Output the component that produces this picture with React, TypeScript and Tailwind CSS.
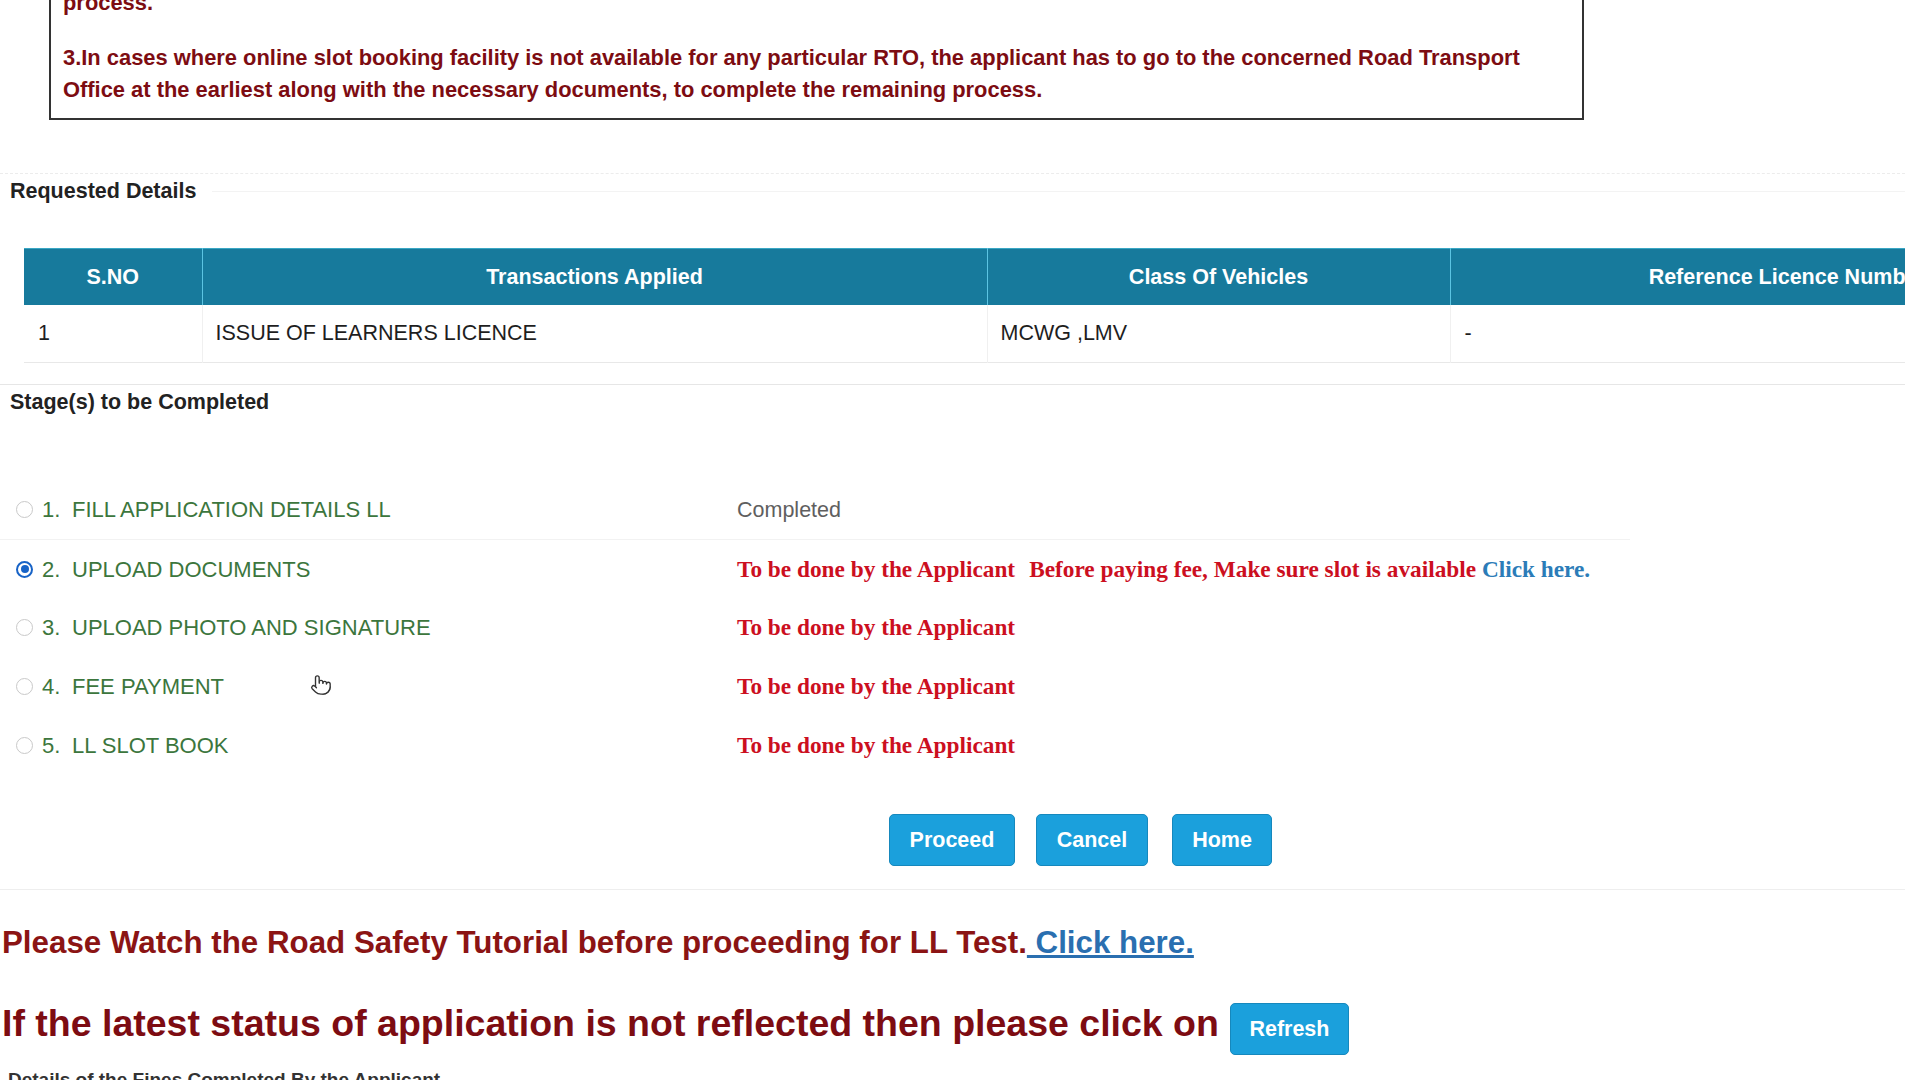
import { Pointer } from "lucide-react";

const STAGES = [
  { no: "1.", label: "FILL APPLICATION DETAILS LL", status: "completed" },
  { no: "2.", label: "UPLOAD DOCUMENTS", status: "pending", checked: true, note: true },
  { no: "3.", label: "UPLOAD PHOTO AND SIGNATURE", status: "pending" },
  { no: "4.", label: "FEE PAYMENT", status: "pending", cursor: true },
  { no: "5.", label: "LL SLOT BOOK", status: "pending" },
];

function Radio({ checked }: { checked?: boolean }) {
  if (checked) {
    return (
      <span className="flex h-[17px] w-[17px] items-center justify-center rounded-full border-2 border-[#1763c7] bg-white">
        <span className="h-[8px] w-[8px] rounded-full bg-[#1763c7]" />
      </span>
    );
  }
  return <span className="h-[17px] w-[17px] rounded-full border border-[#c9c9c9] bg-white" />;
}

function BlueButton({ label, width }: { label: string; width: string }) {
  return (
    <button
      type="button"
      className={`h-[52px] ${width} rounded-[5px] border border-[#1688bd] bg-[#1ba0dc] text-[21.5px] font-bold text-white`}
    >
      {label}
    </button>
  );
}

export default function App() {
  return (
    <div className="h-[1080px] w-[1905px] overflow-hidden bg-white font-['Liberation_Sans',Arial,sans-serif] text-[#222]">
      {/* instructions box, top is scrolled away */}
      <div className="-mt-[15px] ml-[49px] w-[1535px] border-2 border-[#333] px-[12px] pb-[12px] text-[21.9px] font-bold leading-[32px] text-[#7d0c12]">
        <p>process.</p>
        <p className="mt-[23px]">
          3.In cases where online slot booking facility is not available for any particular RTO, the applicant has to go to the concerned Road Transport
          <br />
          Office at the earliest along with the necessary documents, to complete the remaining process.
        </p>
      </div>

      <div className="mt-[53px] border-t border-dashed border-[#ececec]" />

      <div className="mt-[5px] flex items-center gap-4 pl-[10px]">
        <h2 className="text-[21.5px] font-bold leading-[24px] text-[#222]">Requested Details</h2>
        <div className="h-px flex-1 bg-[#f3f3f3]" />
      </div>

      <table className="mt-[45px] ml-[24px] w-[2100px] table-fixed border-collapse text-[21.5px]">
        <colgroup>
          <col className="w-[178px]" />
          <col className="w-[785px]" />
          <col className="w-[463px]" />
          <col />
        </colgroup>
        <thead>
          <tr className="h-[56px] border-t border-[#3aa7c4] bg-[#177a9c] font-bold text-white">
            <th className="text-center">S.NO</th>
            <th className="border-l border-[#5cc4e2] text-center">Transactions Applied</th>
            <th className="border-l border-[#5cc4e2] text-center">Class Of Vehicles</th>
            <th className="border-l border-[#5cc4e2] text-center">Reference Licence Number</th>
          </tr>
        </thead>
        <tbody>
          <tr className="h-[58px] border-b border-[#e8e8e8] font-normal text-[#1e1e1e]">
            <td className="pl-[14px]">1</td>
            <td className="border-l border-[#f0f0f0] pl-[13px]">ISSUE OF LEARNERS LICENCE</td>
            <td className="border-l border-[#f0f0f0] pl-[13px]">MCWG ,LMV</td>
            <td className="border-l border-[#f0f0f0] pl-[14px]">-</td>
          </tr>
        </tbody>
      </table>

      <div className="mt-[21px] border-t border-[#e6e6e6] pt-[5px] pl-[10px]">
        <h2 className="text-[21.5px] font-bold leading-[24px] text-[#222]">Stage(s) to be Completed</h2>
      </div>

      <div className="mt-[67px] flex flex-col">
        {STAGES.map((s, i) => (
          <div
            key={s.no}
            className={`flex h-[58.7px] w-[1630px] items-center ${i === 0 ? "border-b border-[#f2f2f2]" : ""}`}
          >
            <div className="relative flex w-[737px] items-center pl-[16px] text-[22px] text-[#3c763d]">
              <Radio checked={s.checked} />
              <span className="ml-[9px] w-[30px]">{s.no}</span>
              <span>{s.label}</span>
              {s.cursor && (
                <Pointer
                  size={22}
                  strokeWidth={1.5}
                  className="absolute left-[310px] top-[4px] fill-white text-[#333]"
                />
              )}
            </div>
            {s.status === "completed" ? (
              <span className="text-[21.5px] text-[#5f5f5f]">Completed</span>
            ) : (
              <span className="font-['Liberation_Serif','Times_New_Roman',serif] text-[23.3px] font-bold text-[#cc0f1f]">
                To be done by the Applicant
                {s.note && (
                  <>
                    <span className="ml-[14px]">Before paying fee, Make sure slot is available </span>
                    <a className="text-[#2b7cb8]">Click here.</a>
                  </>
                )}
              </span>
            )}
          </div>
        ))}
      </div>

      <div className="mt-[40px] flex pl-[889px]">
        <BlueButton label="Proceed" width="w-[126px]" />
        <div className="ml-[21px]">
          <BlueButton label="Cancel" width="w-[112px]" />
        </div>
        <div className="ml-[24px]">
          <BlueButton label="Home" width="w-[100px]" />
        </div>
      </div>

      <div className="mt-[23px] border-t border-[#eeeeee]" />

      <p className="mt-[35px] pl-[2px] text-[31.3px] font-bold leading-[36px] text-[#8b1414]">
        Please Watch the Road Safety Tutorial before proceeding for LL Test.
        <a className="text-[#2a6fb0] underline"> Click here.</a>
      </p>

      <div className="mt-[40px] flex items-start pl-[2px]">
        <p className="text-[37.5px] font-bold leading-[44px] text-[#7d0c12]">
          If the latest status of application is not reflected then please click on
        </p>
        <div className="ml-[11px] mt-[2px]">
          <BlueButton label="Refresh" width="w-[119px]" />
        </div>
      </div>

      <p className="mt-[14px] pl-[8px] text-[19px] font-bold leading-[22px] text-[#333]">
        Details of the Fines Completed By the Applicant
      </p>
    </div>
  );
}
